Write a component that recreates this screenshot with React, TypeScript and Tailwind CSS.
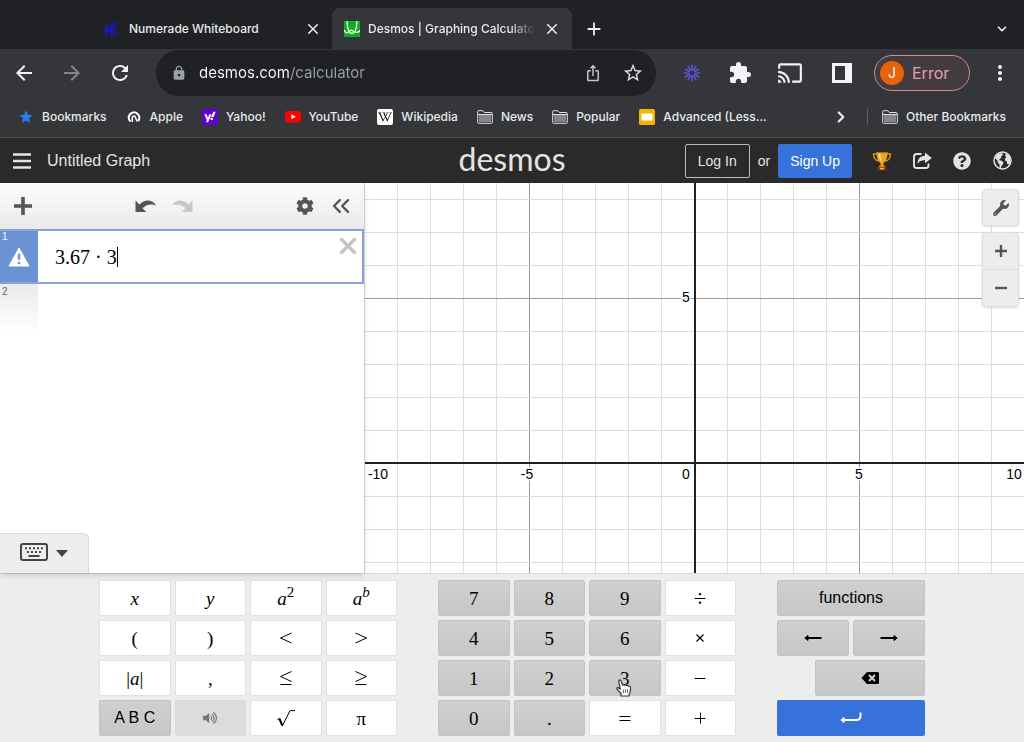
import { useState, type ReactNode } from "react";
import clsx from "clsx";
import {
  MdAdd,
  MdArrowBack,
  MdArrowForward,
  MdCast,
  MdClose,
  MdExtension,
  MdIosShare,
  MdLock,
  MdMoreVert,
  MdRefresh,
  MdStar,
  MdStarBorder,
} from "react-icons/md";
import {
  FaCog,
  FaQuestionCircle,
  FaVolumeUp,
  FaWikipediaW,
  FaWrench,
  FaYahoo,
} from "react-icons/fa";
import { ChevronDown, ChevronRight, ChevronsLeft } from "lucide-react";

type KeyDef = {
  label: ReactNode;
  name: string;
  tone?: "light" | "dark" | "muted";
  plain?: boolean;
  className?: string;
};

const UNIT = 33;
const ORIGIN = { x: 330, y: 280 };

const FolderIcon = () => (
  <svg viewBox="0 0 16 14" className="h-3.5 w-4" fill="none" stroke="#dfe0e2">
    <path d="M.7 12.5V1.6q0-.9.9-.9h4.2l1.4 1.8h7.2q.9 0 .9.9v9.1q0 .8-.9.8H1.6q-.9 0-.9-.8Z" />
    <path d="M2 5h12v7H2Z" fill="#85868a" stroke="none" />
    <path d="M.7 4.5h14.6" />
  </svg>
);

const NumeradeIcon = () => (
  <svg viewBox="0 0 18 18" className="size-4" fill="none" stroke="#1c16c9" strokeWidth="2.6">
    <path d="M2.300 16V4.500M2.300 5l6.500 10V2" />
    <path d="M12.600 1v14" strokeWidth="2" />
    <path d="M15 15h2" strokeWidth="2" />
  </svg>
);

const DesmosIcon = () => (
  <svg viewBox="0 0 16 16" className="size-4" fill="none" stroke="#fff" strokeWidth="1.300">
    <path d="M0 0h16v16H0z" fill="#0fae1f" stroke="none" />
    <path d="M3 0c.3 7 1.800 12.500 5 12.500S12.700 7 13 0" />
    <path d="M0 9c1.500 3 3 3.500 4.500 2S7 8.500 8.500 9.500s4.500 4 7.500 0" />
  </svg>
);

const AppleNewsIcon = () => (
  <svg viewBox="0 0 16 16" className="size-4" fill="none" stroke="#fff">
    <path d="M4.500 12.500A5.200 5.200 0 1 1 12 12" strokeWidth="2.200" />
    <path d="M6.300 13V8q1.700-2 3 0l1.800 4.500" strokeWidth="1.500" />
  </svg>
);

const YoutubeIcon = () => (
  <svg viewBox="0 0 16 12" className="h-3 w-4">
    <rect width="16" height="11.500" rx="3" fill="#f00" />
    <path d="m6.400 3.300 4.400 2.500-4.400 2.500Z" fill="#fff" />
  </svg>
);

const SlidesIcon = () => (
  <svg viewBox="0 0 16 16" className="size-4">
    <rect width="16" height="16" rx="1.500" fill="#f4b400" />
    <rect x="2.500" y="4.500" width="11" height="7" fill="#fff" />
  </svg>
);

const BurstIcon = () => (
  <svg viewBox="0 0 18 18" className="size-[18px]" stroke="#5f50d8" strokeWidth="1.700" strokeLinecap="round">
    {Array.from({ length: 12 }, (_, i) => (
      <path key={i} d="M9 5.800V1.500" transform={`rotate(${i * 30} 9 9)`} />
    ))}
  </svg>
);

const SidePanelIcon = () => (
  <svg viewBox="0 0 20 20" className="size-5" fill="#f1f3f4" fillRule="evenodd">
    <path d="M0 0h20v20H0ZM3 3v14h10V3Z" />
  </svg>
);

const TrophyIcon = () => (
  <svg viewBox="0 0 20 20" className="size-5">
    <path d="M5 3H1.500c0 4 2 6.500 5.500 7M15 3h3.500c0 4-2 6.500-5.500 7" fill="none" stroke="#d99013" strokeWidth="1.400" />
    <path d="M4.500 1h11c0 6-1.500 9.500-4 11v3h-3v-3c-2.500-1.500-4-5-4-11Z" fill="#eaa51b" />
    <path d="M6.500 1.500h2l.8 9.500C7.500 9 6.600 6 6.500 1.500Z" fill="#ffe07a" />
    <path d="M4.500 1h11v1.300h-11Z" fill="#b9700c" />
    <path d="M7.500 14.500h5L13.500 16h-7Z" fill="#d98e14" />
    <path d="M5.500 16h9v3.300h-9Z" fill="#8a3c10" />
    <path d="M8 16.800h4v1.600H8Z" fill="#f0b936" />
  </svg>
);

const ShareIcon = () => (
  <svg viewBox="0 0 19 17" className="h-[17px] w-[19px]">
    <path
      d="M8.500 2H3.500Q1 2 1 4.500v9Q1 16 3.500 16h9.500q2.500 0 2.500-2.500v-2"
      fill="none"
      stroke="currentColor"
      strokeWidth="1.900"
    />
    <path d="M12 .5 18.800 6 12 11.300V8.200C8.500 8.200 6 9 4.600 12.300 4.300 7 7.500 3.800 12 3.700Z" fill="currentColor" />
  </svg>
);

const GlobeIcon = () => (
  <svg viewBox="0 0 19 19" className="size-[19px]">
    <circle cx="9.500" cy="9.500" r="8.500" fill="none" stroke="currentColor" strokeWidth="1.500" />
    <path
      d="M4 3.500 8 2l2 .8-.6 1.700-1.400.7.3 1.500L6.500 8l-.3 1.300 2.300.4 2 1.600-.6 2L8.400 15l-.5 2.300-1.300-.5-.2-3.600-1.700-1.700-.2-2L2 7Z"
      fill="currentColor"
    />
    <path d="m12.500 2.200 3.200 2.300 1.800 3.300-.4 4-1.800 1.700-1.200-.8-.2-2.200-1.700-.8-.3-2.200 1.500-1.300-1.200-1.400Z" fill="currentColor" />
  </svg>
);

const UndoIcon = ({ flip = false }: { flip?: boolean }) => (
  <svg viewBox="0 0 22 14" className={clsx("h-3.5 w-[22px]", flip && "-scale-x-100")} fill="currentColor">
    <path d="M.5 1.500V13h10.800L7.500 9.300c3.500-3.600 8.500-4.800 13.500-2.700C17.500.2 9.800-.2 4.500 5.500Z" />
  </svg>
);

const KeyboardIcon = () => (
  <svg viewBox="0 0 28 18" className="mb-1 h-[18px] w-7" fill="none" stroke="#444">
    <rect x="1" y="1" width="26" height="16" rx="2" strokeWidth="2" />
    <path d="M5 5.200h18.500" strokeWidth="2" strokeDasharray="2 2" />
    <path d="M7 9h15" strokeWidth="2" strokeDasharray="2 2" />
    <path d="M8.500 13h11" strokeWidth="2" />
  </svg>
);

const WarningIcon = () => (
  <svg viewBox="0 0 24 21" className="mt-1 h-5 w-6">
    <path d="M12 1 22.500 20h-21Z" fill="#fff" stroke="#fff" strokeLinejoin="round" />
    <path d="M12 7v6.500M12 15.500V18" stroke="#6b93d3" strokeWidth="2.600" />
  </svg>
);

const ArrowIcon = ({ flip = false }: { flip?: boolean }) => (
  <svg viewBox="0 0 18 8" className={clsx("h-2 w-[18px]", flip && "-scale-x-100")}>
    <path d="M3 4h14.500" stroke="#000" strokeWidth="2" />
    <path d="M.8 4 4 1.500v5Z" stroke="#000" strokeLinejoin="round" />
  </svg>
);

const BackspaceIcon = () => (
  <svg viewBox="0 0 18 12" className="h-3 w-[18px]">
    <path d="M.5 6 5.500.6Q6 0 7 0h9.500Q18 0 18 1.500v9q0 1.500-1.500 1.500H7q-1 0-1.500-.6Z" />
    <path d="m8 3 6 6m0-6L8 9" stroke="#d0d0d0" strokeWidth="2" />
  </svg>
);

const EnterIcon = () => (
  <svg viewBox="0 0 22 12" className="h-3 w-[22px]">
    <path d="M3 8h13.500q4 0 4-4V.5" fill="none" stroke="#fff" strokeWidth="2" />
    <path d="M.8 8 4 5.500v5Z" fill="#fff" stroke="#fff" strokeLinejoin="round" />
  </svg>
);

const RootIcon = () => (
  <svg viewBox="0 0 18 17" className="h-[17px] w-[18px]" fill="none" stroke="#000">
    <path d="m.5 9.500 1.800-1" />
    <path d="m2.300 8.500 3 7" strokeWidth="2" />
    <path d="M5.300 16 13 .6h5" />
  </svg>
);

const LessIcon = ({ flip = false, orEqual = false }: { flip?: boolean; orEqual?: boolean }) => (
  <svg viewBox="0 0 14 16" className={clsx("h-4 w-3.5", flip && "-scale-x-100")} fill="none" stroke="#000">
    <path d={orEqual ? "M12.500 1.500 1.500 6.500l11 5M1.500 14.500h11" : "M12.500 3 1.500 8l11 5"} />
  </svg>
);

const OperatorIcon = ({ kind }: { kind: "divide" | "times" | "minus" | "equals" | "plus" }) => (
  <svg viewBox="0 0 12 12" className="size-3" fill="none" stroke="#000">
    {kind === "divide" && (
      <>
        <path d="M.5 6.500h11" />
        <circle cx="6" cy="2.200" r=".8" fill="#000" />
        <circle cx="6" cy="10.600" r=".8" fill="#000" />
      </>
    )}
    {kind === "times" && <path d="m2.500 2.500 7 7m0-7-7 7" strokeWidth="1.200" />}
    {kind === "minus" && <path d="M.5 6.500h11" />}
    {kind === "equals" && <path d="M.5 4.500h11M.5 8.500h11" />}
    {kind === "plus" && <path d="M.5 6.500h11M6.500.5v11" />}
  </svg>
);

const HandCursor = () => (
  <svg
    viewBox="0 0 16 18"
    className="pointer-events-none absolute top-[18px] left-[26px] h-[18px] w-4"
    fill="#fff"
    stroke="#333"
    strokeWidth="1.200"
    strokeLinejoin="round"
  >
    <path d="M5 17v-2.500L1 10.200q-.6-1.700 1-1.700l2.400 1.700L2.700 2.500q0-1.500 1.200-1.600 1 0 1.300 1.200l1.300 4q.9-1 1.900.1 1.100-.9 2 .3 1.300-.6 2.200.7 2.100-.1 2 2.200l-.5 3.800-1 1.800v2Z" />
    <path d="m7.200 10.500.4 3.500M9.300 10.300l.2 3.500M11.500 10.300v3.300" strokeWidth=".8" />
  </svg>
);

const BOOKMARKS: { label: string; icon: ReactNode }[] = [
  { label: "Bookmarks", icon: <MdStar className="size-4 text-[#2b7de9]" /> },
  { label: "Apple", icon: <AppleNewsIcon /> },
  {
    label: "Yahoo!",
    icon: (
      <span className="flex size-4 items-center justify-center bg-[#5f01d1]">
        <FaYahoo className="size-3 text-white" />
      </span>
    ),
  },
  { label: "YouTube", icon: <YoutubeIcon /> },
  {
    label: "Wikipedia",
    icon: (
      <span className="flex size-4 items-center justify-center rounded-xs bg-white">
        <FaWikipediaW className="size-3.5 text-black" />
      </span>
    ),
  },
  { label: "News", icon: <FolderIcon /> },
  { label: "Popular", icon: <FolderIcon /> },
  { label: "Advanced (Less...", icon: <SlidesIcon /> },
];

const LETTER_KEYS: KeyDef[] = [
  { name: "x", label: <i>x</i> },
  { name: "y", label: <i>y</i> },
  { name: "a squared", label: <span><i>a</i><sup className="text-[15px]">2</sup></span> },
  { name: "a to the b", label: <i>a<sup className="text-[15px]">b</sup></i> },
  { name: "left parenthesis", label: "(" },
  { name: "right parenthesis", label: ")" },
  { name: "less than", label: <LessIcon /> },
  { name: "greater than", label: <LessIcon flip /> },
  { name: "absolute value", label: <span>|<i>a</i>|</span> },
  { name: "comma", label: "," },
  { name: "less than or equal", label: <LessIcon orEqual /> },
  { name: "greater than or equal", label: <LessIcon flip orEqual /> },
  { name: "letters", label: "A B C", tone: "dark", plain: true },
  { name: "audio trace", label: <FaVolumeUp className="size-3.5 text-[#777]" />, tone: "muted" },
  { name: "square root", label: <RootIcon /> },
  { name: "pi", label: "π" },
];

const NUMBER_KEYS: KeyDef[] = [
  { name: "7", label: "7", tone: "dark" },
  { name: "8", label: "8", tone: "dark" },
  { name: "9", label: "9", tone: "dark" },
  { name: "divide", label: <OperatorIcon kind="divide" /> },
  { name: "4", label: "4", tone: "dark" },
  { name: "5", label: "5", tone: "dark" },
  { name: "6", label: "6", tone: "dark" },
  { name: "times", label: <OperatorIcon kind="times" /> },
  { name: "1", label: "1", tone: "dark" },
  { name: "2", label: "2", tone: "dark" },
  { name: "3", label: <>3<HandCursor /></>, tone: "dark" },
  { name: "minus", label: <OperatorIcon kind="minus" /> },
  { name: "0", label: "0", tone: "dark" },
  { name: "decimal point", label: ".", tone: "dark" },
  { name: "equals", label: <OperatorIcon kind="equals" /> },
  { name: "plus", label: <OperatorIcon kind="plus" /> },
];

const Key = ({ name, label, tone = "light", plain = false, className }: KeyDef) => (
  <button
    aria-label={name}
    className={clsx(
      "relative flex h-9 items-center justify-center rounded-xs border leading-none text-black",
      plain ? "font-['Liberation_Sans',sans-serif] text-base" : "font-['Liberation_Serif',serif] text-[19px]",
      tone === "light" && "border-[#e0e0e0] bg-white",
      tone === "dark" && "border-[#c3c3c3] bg-linear-to-b from-[#d0d0d0] to-[#c6c6c6]",
      tone === "muted" && "border-[#dadada] bg-[#dcdcdc]",
      className
    )}
  >
    {label}
  </button>
);

const BrowserTabs = () => (
  <div className="flex h-[49px] items-end bg-[#202124] text-[#e8eaed]">
    <div className="ml-24 flex h-[41px] w-[236px] items-center pr-2.5 pl-2">
      <NumeradeIcon />
      <button className="ml-[9px] flex-1 text-left">Numerade Whiteboard</button>
      <button aria-label="Close Numerade Whiteboard">
        <MdClose className="size-[18px]" />
      </button>
    </div>
    <div className="flex h-[41px] w-60 items-center rounded-t-lg bg-[#35363a] pr-[11px] pl-3">
      <DesmosIcon />
      <button className="ml-2 flex-1 overflow-hidden mask-r-from-85% text-left whitespace-nowrap">
        Desmos | Graphing Calculator
      </button>
      <button aria-label="Close Desmos" className="ml-2">
        <MdClose className="size-[18px]" />
      </button>
    </div>
    <button aria-label="New tab" className="flex h-[41px] w-11 items-center justify-center">
      <MdAdd className="size-[22px]" />
    </button>
    <button aria-label="Search tabs" className="ml-auto flex h-[41px] w-11 items-center justify-center">
      <ChevronDown className="size-3.5" strokeWidth={3} />
    </button>
  </div>
);

const ToolButton = ({ name, className, children }: { name: string; className?: string; children: ReactNode }) => (
  <button aria-label={name} className={clsx("flex h-full items-center justify-center", className ?? "w-12")}>
    {children}
  </button>
);

const BrowserToolbar = () => (
  <div className="flex h-12 items-center bg-[#35363a] text-[#f1f3f4]">
    <ToolButton name="Back"><MdArrowBack className="size-6" /></ToolButton>
    <ToolButton name="Forward"><MdArrowForward className="size-6 text-[#85868a]" /></ToolButton>
    <ToolButton name="Reload"><MdRefresh className="size-6" /></ToolButton>
    <div className="mx-3 flex h-[46px] flex-1 items-center rounded-full bg-[#202124]">
      <MdLock className="ml-[15px] size-4 text-[#9aa0a6]" />
      <input
        aria-label="Address"
        className="ml-3 min-w-0 flex-1 bg-linear-to-r from-white from-[90px] to-[#9aa0a6] to-[90px] bg-clip-text text-[15px] font-normal text-transparent outline-none"
        defaultValue="desmos.com/calculator"
      />
      <button aria-label="Share page" className="flex w-10 justify-center">
        <MdIosShare className="size-[18px] text-[#c4c7c5]" />
      </button>
      <button aria-label="Bookmark page" className="mr-[3px] flex w-10 justify-center">
        <MdStarBorder className="size-[22px] text-[#dadce0]" />
      </button>
    </div>
    <ToolButton name="Recorder"><BurstIcon /></ToolButton>
    <ToolButton name="Extensions"><MdExtension className="size-6" /></ToolButton>
    <ToolButton name="Cast" className="w-[52px]"><MdCast className="size-[26px]" /></ToolButton>
    <ToolButton name="Side panel" className="w-[52px]"><SidePanelIcon /></ToolButton>
    <button className="ml-1.5 flex h-9 w-24 items-center gap-2 rounded-full border border-[#c98f95] bg-[#433b3f] pl-[5px] text-base font-normal text-[#e6a0a8]">
      <span className="flex size-6 items-center justify-center rounded-full bg-[#e8630a] text-sm text-white">J</span>
      Error
    </button>
    <ToolButton name="Menu" className="ml-1.5 w-12"><MdMoreVert className="size-6" /></ToolButton>
  </div>
);

const BookmarksBar = () => (
  <nav className="flex h-[41px] items-center gap-[19px] border-b border-[#4b4c50] bg-[#35363a] pr-[18px] pl-[18px] text-[#e8eaed]">
    {BOOKMARKS.map((bookmark) => (
      <a key={bookmark.label} href="#" className="flex items-center gap-2 whitespace-nowrap">
        {bookmark.icon}
        {bookmark.label}
      </a>
    ))}
    <div className="ml-auto flex items-center">
      <button aria-label="More bookmarks">
        <ChevronRight className="size-[18px]" strokeWidth={3} />
      </button>
      <span className="mr-3.5 ml-[17px] h-4 w-px bg-[#5f6064]" />
      <a href="#" className="flex items-center gap-2 whitespace-nowrap">
        <FolderIcon />
        Other Bookmarks
      </a>
    </div>
  </nav>
);

const GraphHeader = () => (
  <header className="grid h-[45px] grid-cols-[1fr_auto_1fr] items-center bg-[#2a2a2a] text-base text-[#e4e4e4]">
    <div className="flex items-center gap-[15px] pl-3">
      <button aria-label="Open graphs">
        <svg viewBox="0 0 20 16" className="h-4 w-5" stroke="#e4e4e4" strokeWidth="2.400">
          <path d="M1 1.500h18M1 8h18M1 14.500h18" />
        </svg>
      </button>
      <button>Untitled Graph</button>
    </div>
    <a href="#" className="pb-1 font-['Lato',sans-serif] text-[32px] leading-none">
      desmos
    </a>
    <div className="flex items-center justify-end pr-0.5 text-sm">
      <button className="h-[34px] rounded-xs border border-[#bbb] px-3">Log In</button>
      <span className="mx-2">or</span>
      <button className="mr-2.5 h-[34px] rounded-xs bg-[#3672d9] px-3 text-white">Sign Up</button>
      <ToolButton name="Challenges" className="w-10"><TrophyIcon /></ToolButton>
      <ToolButton name="Share graph" className="w-10"><ShareIcon /></ToolButton>
      <ToolButton name="Help" className="w-10"><FaQuestionCircle className="size-[18px]" /></ToolButton>
      <ToolButton name="Language" className="w-10"><GlobeIcon /></ToolButton>
    </div>
  </header>
);

const ExpressionPanel = () => {
  const [expression, setExpression] = useState("3.67 · 3");

  return (
    <section className="z-10 flex w-[365px] flex-none flex-col border-r border-[#ccc] bg-white shadow-md">
      <div className="flex h-[46px] items-center bg-linear-to-b from-[#fcfcfc] to-[#eaeaea] text-[#555]">
        <ToolButton name="Add item" className="w-[46px]">
          <svg viewBox="0 0 18 18" className="size-[18px]" stroke="currentColor" strokeWidth="3.600">
            <path d="M9 0v18M0 9h18" />
          </svg>
        </ToolButton>
        <ToolButton name="Undo" className="ml-auto w-9"><UndoIcon /></ToolButton>
        <ToolButton name="Redo" className="w-9 text-[#c8c8c8]"><UndoIcon flip /></ToolButton>
        <ToolButton name="Edit list" className="ml-[87px] w-9"><FaCog className="size-[18px]" /></ToolButton>
        <ToolButton name="Hide list" className="mr-[5px] w-9"><ChevronsLeft className="size-7" /></ToolButton>
      </div>
      <div className="flex h-[55px] border-y-2 border-r-2 border-[#86a4d8] bg-white">
        <div className="flex w-[38px] flex-col items-center bg-[#6b93d3]">
          <span className="self-start pl-0.5 text-[10px] leading-3 text-white">1</span>
          <WarningIcon />
        </div>
        <div className="flex flex-1 items-center pl-[17px] font-['Liberation_Serif',serif] text-xl text-black">
          <input
            aria-label="Expression 1"
            className="field-sizing-content outline-none"
            value={expression}
            onChange={(e) => setExpression(e.target.value)}
          />
          <span className="h-5 w-px bg-black" />
        </div>
        <button aria-label="Delete expression" className="mt-1.5 mr-[5px] self-start">
          <svg viewBox="0 0 18 18" className="size-[18px]" stroke="#c4c4c4" strokeWidth="3.400">
            <path d="m1.500 1.500 15 15m0-15-15 15" />
          </svg>
        </button>
      </div>
      <div className="h-12 w-[38px] bg-linear-to-b from-[#eaeaea] to-white pl-0.5 text-[10px] leading-4 text-[#666]">
        2
      </div>
      <button
        aria-label="Toggle keypad"
        className="mt-auto flex h-10 w-[89px] items-center gap-2 rounded-tr-md border-t border-r border-[#d8d8d8] bg-[#ededed] pl-5"
      >
        <KeyboardIcon />
        <svg viewBox="0 0 12 7" className="h-[7px] w-3" fill="#444">
          <path d="M0 0h12L6 7Z" />
        </svg>
      </button>
    </section>
  );
};

const AXIS_LABELS = [
  { x: 13, y: 296, text: "-10" },
  { x: 162, y: 296, text: "-5" },
  { x: 321, y: 296, text: "0" },
  { x: 494, y: 296, text: "5" },
  { x: 649, y: 296, text: "10" },
  { x: 321, y: 119, text: "5" },
];

const Graph = () => (
  <section className="relative flex-1 bg-white">
    <svg viewBox="0 0 659 390" preserveAspectRatio="xMidYMid slice" className="absolute size-full">
      {Array.from({ length: 21 }, (_, i) => i - 10).map((n) => (
        <path
          key={`x${n}`}
          d={`M${ORIGIN.x + n * UNIT - 0.5} 0V390`}
          stroke={n % 5 === 0 ? "#999" : "#dedede"}
        />
      ))}
      {Array.from({ length: 12 }, (_, i) => i - 3).map((n) => (
        <path
          key={`y${n}`}
          d={`M0 ${ORIGIN.y - n * UNIT + 0.5}H659`}
          stroke={n % 5 === 0 ? "#999" : "#dedede"}
        />
      ))}
      <path d={`M${ORIGIN.x} 0V390M0 ${ORIGIN.y}H659`} stroke="#222" strokeWidth="2" />
      {AXIS_LABELS.map((label) => (
        <text
          key={`${label.x}-${label.y}`}
          x={label.x}
          y={label.y}
          textAnchor="middle"
          className="text-sm"
          fill="#000"
          stroke="#fff"
          strokeWidth="3"
          paintOrder="stroke"
        >
          {label.text}
        </text>
      ))}
    </svg>
    <div className="absolute top-1.5 right-[5px] flex w-[37px] flex-col gap-1.5 text-[#555]">
      <button
        aria-label="Graph settings"
        className="flex h-[37px] items-center justify-center rounded-sm border border-[#ddd] bg-[#ededed] shadow"
      >
        <FaWrench className="size-4" />
      </button>
      <div className="flex flex-col rounded-sm border border-[#ddd] bg-[#ededed] shadow">
        <button aria-label="Zoom in" className="flex h-[37px] items-center justify-center border-b border-[#ddd]">
          <svg viewBox="0 0 12 12" className="size-3" stroke="currentColor" strokeWidth="2.400">
            <path d="M6 0v12M0 6h12" />
          </svg>
        </button>
        <button aria-label="Zoom out" className="flex h-9 items-center justify-center">
          <svg viewBox="0 0 12 12" className="size-3" stroke="currentColor" strokeWidth="2.400">
            <path d="M0 6h12" />
          </svg>
        </button>
      </div>
    </div>
  </section>
);

const Keypad = () => (
  <section className="flex justify-center gap-[41px] border-t border-[#d6d6d6] bg-[#ededed] pt-1.5 pb-1.5">
    <div className="grid w-[298px] grid-cols-4 gap-1">
      {LETTER_KEYS.map((key) => (
        <Key key={key.name} {...key} />
      ))}
    </div>
    <div className="grid w-[298px] grid-cols-4 gap-1">
      {NUMBER_KEYS.map((key) => (
        <Key key={key.name} {...key} />
      ))}
    </div>
    <div className="grid w-[148px] grid-cols-4 gap-1">
      <Key name="functions" label="functions" tone="dark" plain className="col-span-4" />
      <Key name="move left" label={<ArrowIcon />} tone="dark" className="col-span-2" />
      <Key name="move right" label={<ArrowIcon flip />} tone="dark" className="col-span-2" />
      <Key name="backspace" label={<BackspaceIcon />} tone="dark" className="col-span-3 col-start-2" />
      <button aria-label="enter" className="col-span-4 flex h-9 items-center justify-center rounded-xs bg-[#3672d9]">
        <EnterIcon />
      </button>
    </div>
  </section>
);

const App = () => {
  return (
    <div className="flex min-h-screen flex-col font-['Liberation_Sans',Arial,sans-serif]">
      <div className="font-['Inter',sans-serif] text-xs font-medium">
        <BrowserTabs />
        <BrowserToolbar />
        <BookmarksBar />
      </div>
      <GraphHeader />
      <main className="flex flex-1">
        <ExpressionPanel />
        <Graph />
      </main>
      <Keypad />
    </div>
  );
};

export default App;
